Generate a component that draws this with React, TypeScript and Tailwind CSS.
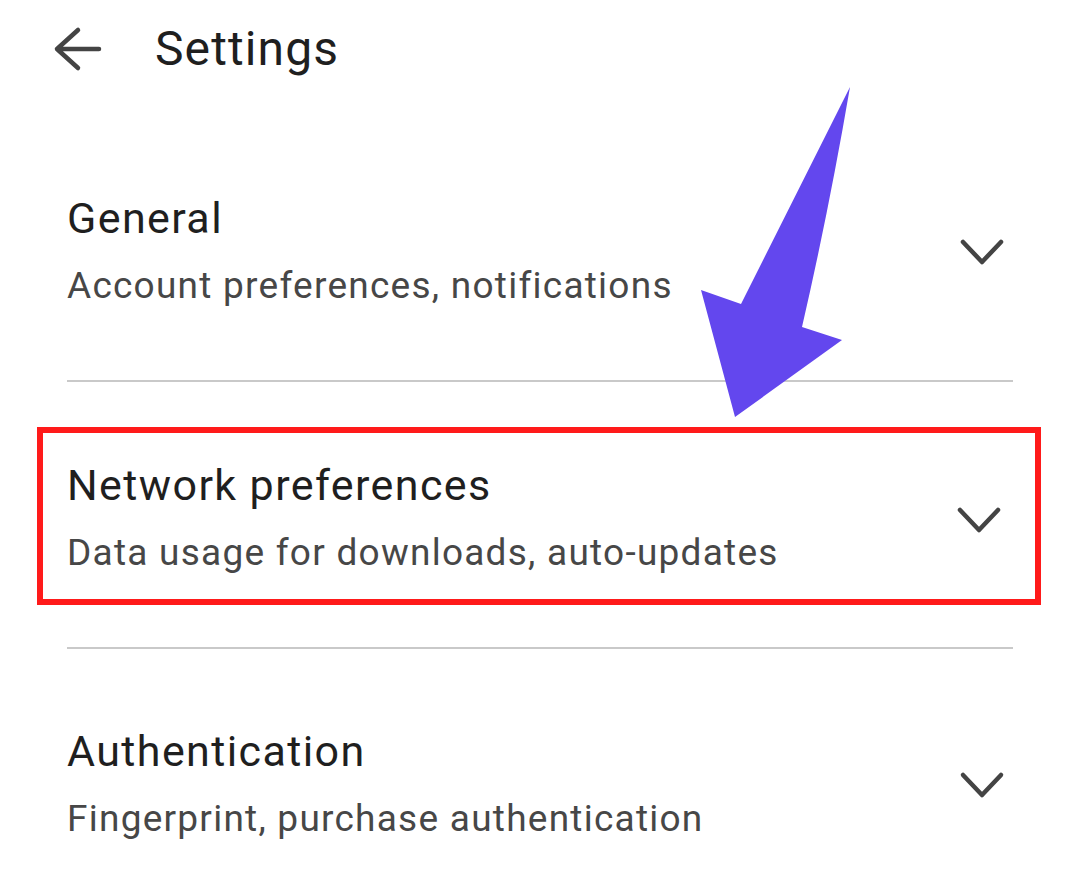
import React from 'react';

const items = [
  { title: 'General', subtitle: 'Account preferences, notifications' },
  { title: 'Network preferences', subtitle: 'Data usage for downloads, auto-updates' },
  { title: 'Authentication', subtitle: 'Fingerprint, purchase authentication' },
];

function Chevron() {
  return (
    <svg width="48" height="30" viewBox="0 0 48 30" fill="none" className="shrink-0">
      <path d="M5 5 L24 25 L43 5" stroke="#444444" strokeWidth="4.5" strokeLinecap="round" strokeLinejoin="round" />
    </svg>
  );
}

function ItemText({ title, subtitle }: { title: string; subtitle: string }) {
  return (
    <div className="flex-1 min-w-0">
      <div className="text-[43px] tracking-[1.4px] leading-[60px] text-[#1f1f1f]">{title}</div>
      <div className="text-[37px] tracking-[1.25px] leading-[76px] text-[#474747]">{subtitle}</div>
    </div>
  );
}

export default function App() {
  return (
    <div className="relative w-[1080px] h-[888px] bg-white overflow-hidden" style={{ fontFamily: 'Roboto, "Noto Sans", sans-serif' }}>
      {/* top bar */}
      <div className="flex items-center h-[98px] pl-[52px]">
        <svg width="52" height="48" viewBox="0 0 52 48" fill="none">
          <path d="M5 24 H47 M26 5 L5 24 L26 43" stroke="#444444" strokeWidth="4.5" strokeLinecap="round" strokeLinejoin="round" />
        </svg>
        <span className="ml-[51px] text-[48px] tracking-[1.1px] text-[#1f1f1f] leading-none">Settings</span>
      </div>

      {/* General */}
      <div className="flex items-center pl-[67px] pr-[74px] pt-[90px] pb-[56px]">
        <ItemText {...items[0]} />
        <div className="-mt-[8px]"><Chevron /></div>
      </div>
      <div className="mx-[67px] h-[2px] bg-[#c9c9c9]" />

      {/* Network preferences, highlighted */}
      <div className="mt-[45px] mb-[42px] ml-[37px] mr-[39px] border-[6px] border-[#ff1a1a] flex items-center pl-[24px] pr-[32px] pt-[22px] pb-[8px]">
        <ItemText {...items[1]} />
        <div className="-mt-[6px]"><Chevron /></div>
      </div>
      <div className="mx-[67px] h-[2px] bg-[#c9c9c9]" />

      {/* Authentication */}
      <div className="flex items-center pl-[67px] pr-[74px] pt-[72px]">
        <ItemText {...items[2]} />
        <div className="-mt-[8px]"><Chevron /></div>
      </div>

      {/* callout arrow */}
      <svg className="absolute left-0 top-0 pointer-events-none" width="1080" height="888" viewBox="0 0 1080 888">
        <path d="M850 87 Q829 210 802 327 L842 340 L735 417 L701 290 L741 304 Z" fill="#6347ee" />
      </svg>
    </div>
  );
}
